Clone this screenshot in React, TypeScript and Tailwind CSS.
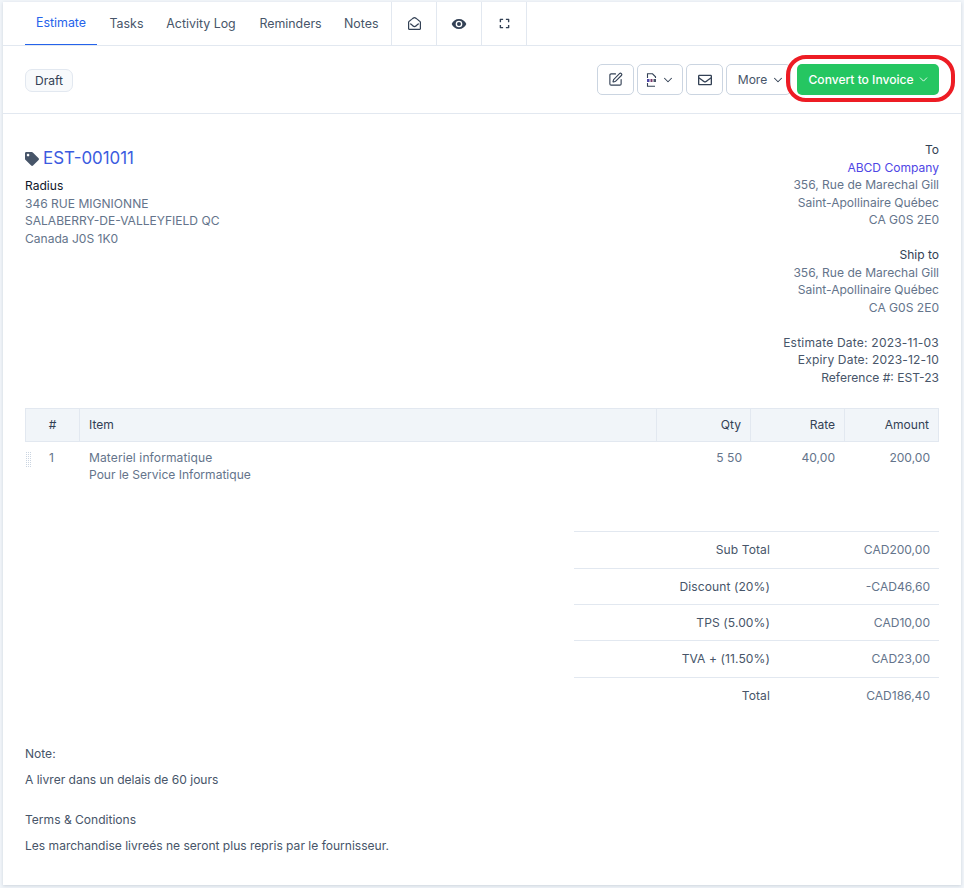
import React from "react";
import { ChevronDown, SquarePen } from "lucide-react";
import { FaTag, FaRegEnvelopeOpen, FaRegEnvelope, FaExpand } from "react-icons/fa";

const Tab = ({ label, active, w }: { label: string; active?: boolean; w: string }) => (
  <div className={`${w} h-full flex items-center justify-center text-[12.4px] ${active ? "text-[#2563eb] border-b border-[#2563eb]" : "text-[#475569]"}`}>{label}</div>
);

const IconTab = ({ children }: { children: React.ReactNode }) => (
  <div className="w-[45px] h-full border-r border-[#e2e8f0] flex items-center justify-center text-[#334155]">{children}</div>
);

const Btn = ({ children, w }: { children: React.ReactNode; w: string }) => (
  <div className={`${w} h-[31px] border border-[#cbd5e1] rounded-[5px] flex items-center justify-center text-[#334155] bg-white`}>{children}</div>
);

const TotalRow = ({ label, value }: { label: string; value: string }) => (
  <div className="h-[36.4px] flex items-center border-t border-[#e2e8f0]">
    <div className="flex-1 text-right text-[#475569] tracking-[0.1px]">{label}</div>
    <div className="w-[169px] pr-[9px] text-right text-[#64748b]">{value}</div>
  </div>
);

const dots = [0, 1, 2, 3, 4, 5, 6, 7];

export default function App() {
  return (
    <div className="w-[964px] h-[888px] bg-[#f1f5f9] pt-[2px] pl-[3px] font-['Inter',sans-serif] text-[12.06px] leading-[17.55px] overflow-hidden">
      <div className="relative w-[958px] h-[883px] bg-white shadow-[0_1px_3px_rgba(100,116,139,0.25)]">
        <div className="h-[43px] box-content border-b border-[#e2e8f0] flex items-stretch pl-[22px]">
          <Tab label="Estimate" active w="w-[72px]" />
          <Tab label="Tasks" w="w-[59px]" />
          <Tab label="Activity Log" w="w-[90px]" />
          <Tab label="Reminders" w="w-[89px]" />
          <div className="w-[57px] h-full border-r border-[#e2e8f0] flex items-center text-[12.4px] text-[#475569] pl-[9px]">Notes</div>
          <IconTab><FaRegEnvelopeOpen size={13} /></IconTab>
          <IconTab>
            <svg width="16" height="16" viewBox="0 0 24 24" fill="#334155"><path fillRule="evenodd" d="M12 4.500C7 4.500 2.700 7.600 1 12c1.700 4.400 6 7.500 11 7.500s9.300-3.100 11-7.500c-1.700-4.400-6-7.500-11-7.500zm0 12.500a5 5 0 1 1 0-10 5 5 0 0 1 0 10zm0-8a3 3 0 1 0 0 6 3 3 0 0 0 0-6z" /></svg>
          </IconTab>
          <IconTab><FaExpand size={11} /></IconTab>
        </div>

        <div className="h-[67px] box-content border-b border-[#e2e8f0] flex items-center px-[22px]">
          <div className="h-[23px] w-[48px] mt-[2px] border border-[#e2e8f0] bg-[#f8fafc] rounded-[7px] flex items-center justify-center text-[#334155]">Draft</div>
          <div className="ml-auto flex items-center gap-[3px]">
            <Btn w="w-[37px]"><SquarePen size={15} strokeWidth={1.8} /></Btn>
            <Btn w="w-[46px] gap-[4px]">
              <svg width="11" height="14" viewBox="0 0 11 14" fill="none" stroke="#334155" strokeWidth="1.100">
                <path d="M1.500 5V0.800h5l3 3V5M1.500 10v3.200h7.500" />
                <rect x="1" y="6" width="2.500" height="3" fill="#4f46a5" stroke="none" />
                <rect x="4.500" y="6" width="2" height="3" fill="#7c3a6a" stroke="none" />
                <rect x="7.500" y="6" width="2.500" height="3" fill="#475569" stroke="none" />
              </svg>
              <ChevronDown size={14} strokeWidth={1.8} />
            </Btn>
            <Btn w="w-[37px]"><FaRegEnvelope size={14} /></Btn>
            <Btn w="w-[65px] gap-[4px] mr-[3px] pl-[6px]"><span className="text-[#475569]">More</span><ChevronDown size={14} strokeWidth={1.8} /></Btn>
            <div className="w-[142px] h-[31px] rounded-[5px] bg-[#25c661] text-white font-medium flex items-center justify-center gap-[4px] pl-[3px]">
              Convert to Invoice <ChevronDown size={13} strokeWidth={1.6} />
            </div>
          </div>
        </div>

        <div className="absolute left-[783px] top-[53px] w-[169px] h-[47px] border-[4px] border-[#ed1c24] rounded-[20px] pointer-events-none" />

        <div className="flex justify-between px-[22px] pt-[28px] text-[#64748b]">
          <div>
            <div className="flex items-center h-[31px] mt-[1px] text-[16.9px] gap-[4px]">
              <FaTag size={14} className="text-[#475569]" />
              <span className="text-[#3b5be0]">EST-001011</span>
            </div>
            <div className="mt-[3px] text-[#0f172a]">Radius</div>
            <div>346 RUE MIGNIONNE</div>
            <div>SALABERRY-DE-VALLEYFIELD QC</div>
            <div>Canada J0S 1K0</div>
          </div>
          <div className="text-right -mt-[1px]">
            <div className="text-[#334155]">To</div>
            <div className="text-[#4f46e5]">ABCD Company</div>
            <div>356, Rue de Marechal Gill</div>
            <div>Saint-Apollinaire Québec</div>
            <div>CA G0S 2E0</div>
            <div className="mt-[17.5px] text-[#334155]">Ship to</div>
            <div>356, Rue de Marechal Gill</div>
            <div>Saint-Apollinaire Québec</div>
            <div>CA G0S 2E0</div>
            <div className="mt-[17.5px] text-[#475569] tracking-[0.2px]">Estimate Date: 2023-11-03</div>
            <div className="text-[#475569] tracking-[0.15px]">Expiry Date: 2023-12-10</div>
            <div className="text-[#475569]">Reference #: EST-23</div>
          </div>
        </div>

        <div className="mx-[22px] mt-[21px]">
          <div className="flex h-[34px] items-center bg-[#f1f5f9] border border-[#e2e8f0] text-[#334155]">
            <div className="w-[54px] h-full flex items-center justify-center border-r border-[#e2e8f0]">#</div>
            <div className="flex-1 h-full flex items-center pl-[9px] border-r border-[#e2e8f0]">Item</div>
            <div className="w-[94px] h-full flex items-center justify-end pr-[9px] border-r border-[#e2e8f0]">Qty</div>
            <div className="w-[94px] h-full flex items-center justify-end pr-[9px] border-r border-[#e2e8f0]">Rate</div>
            <div className="w-[93px] h-full flex items-center justify-end pr-[9px]">Amount</div>
          </div>
          <div className="relative flex pt-[7px] text-[#64748b]">
            <svg className="absolute left-[1px] top-[10px]" width="6" height="16" viewBox="0 0 6 16" fill="#cbd5e1">
              {dots.map((d) => (
                <g key={d}>
                  <rect x="0" y={d * 2} width="1" height="1" />
                  <rect x="2" y={d * 2} width="1" height="1" />
                  <rect x="4" y={d * 2} width="1" height="1" />
                </g>
              ))}
            </svg>
            <div className="w-[55px] text-center pr-[2px]">1</div>
            <div className="flex-1 pl-[9px]">
              <div className="tracking-[0.1px]">Materiel informatique</div>
              <div>Pour le Service Informatique</div>
            </div>
            <div className="w-[94px] text-right pr-[9px]">5 50</div>
            <div className="w-[94px] text-right pr-[10px]">40,00</div>
            <div className="w-[94px] text-right pr-[9px]">200,00</div>
          </div>
        </div>

        <div className="ml-[571px] w-[365px] mt-[47.600px]">
          <TotalRow label="Sub Total" value="CAD200,00" />
          <TotalRow label="Discount (20%)" value="-CAD46,60" />
          <TotalRow label="TPS (5.00%)" value="CAD10,00" />
          <TotalRow label="TVA + (11.50%)" value="CAD23,00" />
          <TotalRow label="Total" value="CAD186,40" />
        </div>

        <div className="px-[22px] mt-[31.400px] text-[#475569]">
          <div>Note:</div>
          <div className="mt-[8.500px]">A livrer dans un delais de 60 jours</div>
          <div className="mt-[22.500px]">Terms &amp; Conditions</div>
          <div className="mt-[8.500px]">Les marchandise livreés ne seront plus repris par le fournisseur.</div>
        </div>
      </div>
    </div>
  );
}
